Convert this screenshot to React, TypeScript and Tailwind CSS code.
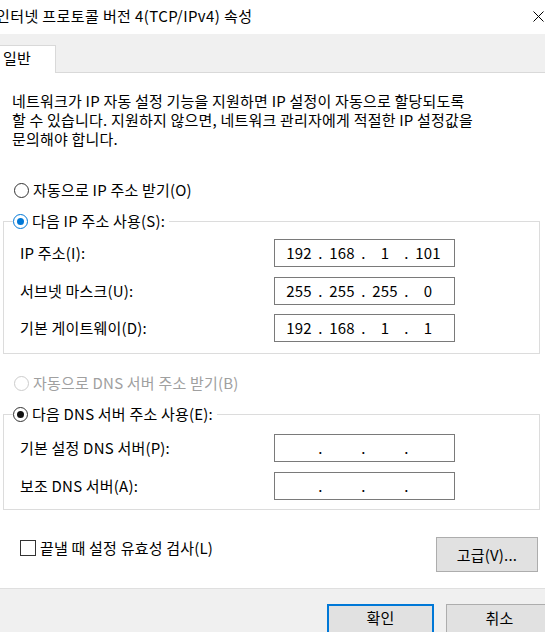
import { Fragment } from 'react';

function Radio({ checked, disabled, accent }: { checked?: boolean; disabled?: boolean; accent?: boolean }) {
  const ring = disabled ? 'border-[#cccccc]' : accent ? 'border-[#0078d7]' : 'border-[#333333]';
  return (
    <span className={`w-[15px] h-[15px] rounded-full border bg-white flex items-center justify-center shrink-0 ${ring}`}>
      {checked && (
        <span className={`w-[7px] h-[7px] rounded-full ${accent ? 'bg-[#0078d7]' : 'bg-[#111111]'}`} />
      )}
    </span>
  );
}

function IpBox({ parts }: { parts: string[] }) {
  return (
    <div className="w-[181px] h-[28px] border border-[#7a7a7a] bg-white flex items-center pl-[6px] leading-[20px]">
      {parts.map((p, i) => (
        <Fragment key={i}>
          <span className="w-[36px] text-center">{p}</span>
          {i < 3 && <span className="w-[7px] text-center">.</span>}
        </Fragment>
      ))}
    </div>
  );
}

function Row({ label, parts }: { label: string; parts: string[] }) {
  return (
    <div className="h-[28px] flex items-center justify-between">
      <span className="leading-[20px]">{label}</span>
      <IpBox parts={parts} />
    </div>
  );
}

export default function App() {
  const empty = ['', '', '', ''];
  return (
    <div className="w-[545px] h-[632px] overflow-hidden bg-white text-black text-[15px] tracking-[0.2px] font-['Noto_Sans_CJK_KR','Noto_Sans',sans-serif] flex flex-col">
      {/* title bar */}
      <div className="h-[34px] shrink-0 flex items-center justify-between pb-[2px]">
        <span className="-ml-[4px] text-[15px] leading-[20px] tracking-[0.4px] whitespace-nowrap">인터넷 프로토콜 버전 4(TCP/IPv4) 속성</span>
        <svg width="11" height="11" viewBox="0 0 11 11" className="mr-[1px]">
          <path d="M0.5 0.5 L10.5 10.5 M10.5 0.5 L0.5 10.5" stroke="#000" strokeWidth="1" fill="none" />
        </svg>
      </div>

      {/* tab strip */}
      <div className="h-[39px] shrink-0 bg-[#f0f0f0] flex items-end">
        <div className="w-[56px] h-[28px] bg-white border-t border-r border-[#d9d9d9] pl-[3px] leading-[24px]">일반</div>
        <div className="flex-1 border-b border-[#d9d9d9]" />
      </div>

      {/* page */}
      <div className="h-[515px] shrink-0 flex flex-col">
        <p className="mt-[18px] ml-[12px] leading-[19px] whitespace-nowrap">
          네트워크가 IP 자동 설정 기능을 지원하면 IP 설정이 자동으로 할당되도록
          <br />
          할 수 있습니다. 지원하지 않으면, 네트워크 관리자에게 적절한 IP 설정값을
          <br />
          문의해야 합니다.
        </p>

        <div className="mt-[32px] ml-[14px] h-[20px] flex items-center gap-[4px]">
          <Radio />
          <span className="leading-[20px]">자동으로 IP 주소 받기(O)</span>
        </div>

        <fieldset className="mt-[11px] ml-[3px] w-[537px] border border-[#dcdcdc] pb-[11px]">
          <legend className="ml-[9px] pr-[4px] h-[20px] flex items-center gap-[4px] bg-white">
            <Radio checked accent />
            <span className="leading-[20px]">다음 IP 주소 사용(S):</span>
          </legend>
          <div className="pt-[8px] pl-[16px] pr-[84px] flex flex-col">
            <Row label="IP 주소(I):" parts={['192', '168', '1', '101']} />
            <div className="mt-[10px]">
              <Row label="서브넷 마스크(U):" parts={['255', '255', '255', '0']} />
            </div>
            <div className="mt-[9px]">
              <Row label="기본 게이트웨이(D):" parts={['192', '168', '1', '1']} />
            </div>
          </div>
        </fieldset>

        <div className="mt-[19px] ml-[14px] h-[20px] flex items-center gap-[4px] text-[#a0a0a0]">
          <Radio disabled />
          <span className="leading-[20px]">자동으로 DNS 서버 주소 받기(B)</span>
        </div>

        <fieldset className="mt-[11px] ml-[3px] w-[537px] border border-[#dcdcdc] pb-[9px]">
          <legend className="ml-[9px] pr-[4px] h-[20px] flex items-center gap-[4px] bg-white">
            <Radio checked />
            <span className="leading-[20px]">다음 DNS 서버 주소 사용(E):</span>
          </legend>
          <div className="pt-[10px] pl-[16px] pr-[84px] flex flex-col gap-[10px]">
            <Row label="기본 설정 DNS 서버(P):" parts={empty} />
            <Row label="보조 DNS 서버(A):" parts={empty} />
          </div>
        </fieldset>

        <div className="mt-[27px] pl-[20px] pr-[7px] flex items-start justify-between">
          <div className="mt-[3px] flex items-center gap-[4px]">
            <span className="w-[16px] h-[16px] border border-[#333333] bg-white shrink-0" />
            <span className="leading-[16px]">끝낼 때 설정 유효성 검사(L)</span>
          </div>
          <button className="w-[102px] h-[35px] bg-[#e1e1e1] border border-[#adadad] leading-[20px]">고급(V)...</button>
        </div>
      </div>

      {/* footer */}
      <div className="flex-1 border-t border-[#dfdfdf] bg-[#f0f0f0] pt-[15px] pl-[327px] flex items-start gap-[12px]">
        <button className="w-[107px] h-[35px] shrink-0 bg-[#e1e1e1] border-2 border-[#0078d7] pt-[1px] flex justify-center items-start leading-[22px]">확인</button>
        <button className="w-[107px] h-[35px] shrink-0 bg-[#e1e1e1] border border-[#adadad] pt-[2px] flex justify-center items-start leading-[22px]">취소</button>
      </div>
    </div>
  );
}
